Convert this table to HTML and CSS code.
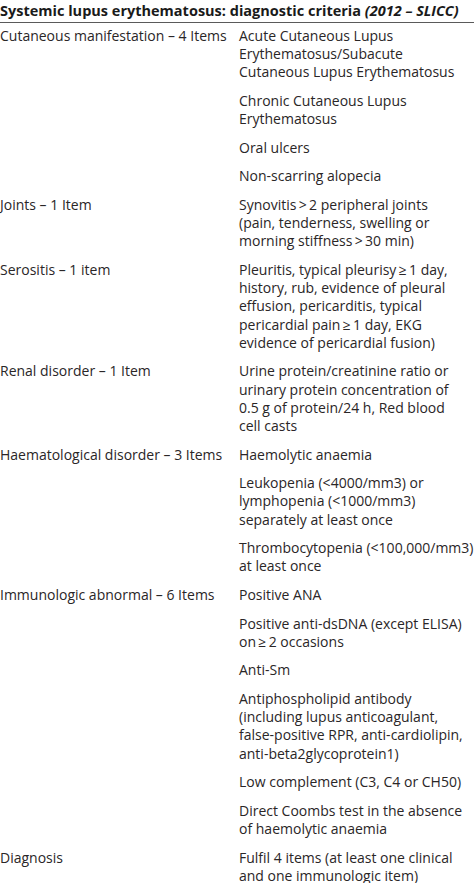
FILE: index.html
```html
<!DOCTYPE html>
<html lang="en">
<head>
<meta charset="utf-8">
<title>Systemic lupus erythematosus: diagnostic criteria</title>
<link rel="stylesheet" href="styles.css">
</head>
<body>
<div class="page">
  <h1 class="title">Systemic lupus erythematosus: diagnostic criteria <em>(2012 – SLICC)</em></h1>
  <div class="table">
    <div class="row">
      <div class="label">Cutaneous manifestation – 4 Items</div>
      <div class="items">
        <p>Acute Cutaneous Lupus<br>Erythematosus/Subacute<br>Cutaneous Lupus Erythematosus</p>
        <p>Chronic Cutaneous Lupus<br>Erythematosus</p>
        <p>Oral ulcers</p>
        <p>Non-scarring alopecia</p>
      </div>
    </div>
    <div class="row">
      <div class="label">Joints – 1 Item</div>
      <div class="items">
        <p>Synovitis&thinsp;&gt;&thinsp;2 peripheral joints<br>(pain, tenderness, swelling or<br>morning stiffness&thinsp;&gt;&thinsp;30 min)</p>
      </div>
    </div>
    <div class="row">
      <div class="label">Serositis – 1 item</div>
      <div class="items">
        <p>Pleuritis, typical pleurisy&thinsp;≥&thinsp;1 day,<br>history, rub, evidence of pleural<br>effusion, pericarditis, typical<br>pericardial pain&thinsp;≥&thinsp;1 day, EKG<br>evidence of pericardial fusion)</p>
      </div>
    </div>
    <div class="row">
      <div class="label">Renal disorder – 1 Item</div>
      <div class="items">
        <p>Urine protein/creatinine ratio or<br>urinary protein concentration of<br>0.5 g of protein/24 h, Red blood<br>cell casts</p>
      </div>
    </div>
    <div class="row">
      <div class="label">Haematological disorder – 3 Items</div>
      <div class="items">
        <p>Haemolytic anaemia</p>
        <p>Leukopenia (&lt;4000/mm3) or<br>lymphopenia (&lt;1000/mm3)<br>separately at least once</p>
        <p>Thrombocytopenia (&lt;100,000/mm3)<br>at least once</p>
      </div>
    </div>
    <div class="row">
      <div class="label">Immunologic abnormal – 6 Items</div>
      <div class="items">
        <p>Positive ANA</p>
        <p>Positive anti-dsDNA (except ELISA)<br>on&thinsp;≥&thinsp;2 occasions</p>
        <p>Anti-Sm</p>
        <p>Antiphospholipid antibody<br>(including lupus anticoagulant,<br>false-positive RPR, anti-cardiolipin,<br>anti-beta2glycoprotein1)</p>
        <p>Low complement (C3, C4 or CH50)</p>
        <p>Direct Coombs test in the absence<br>of haemolytic anaemia</p>
      </div>
    </div>
    <div class="row">
      <div class="label">Diagnosis</div>
      <div class="items">
        <p>Fulfil 4 items (at least one clinical<br>and one immunologic item)</p>
      </div>
    </div>
  </div>
</div>
</body>
</html>
```

FILE: styles.css
```css
html, body {
  margin: 0;
  padding: 0;
  background: #ffffff;
}

body {
  font-family: "Open Sans", "Noto Sans", "Liberation Sans", sans-serif;
  font-size: 14px;
  line-height: 18.2px;
  color: #2a2627;
}

.page {
  width: 474px;
  overflow: hidden;
}

.title {
  margin: 0;
  font-size: 14.5px;
  font-weight: 700;
  line-height: 22px;
  color: #1a1a1a;
  white-space: nowrap;
  border-bottom: 1.5px solid #5a5a5a;
}

.title em {
  font-style: italic;
}

.table {
  display: flex;
  flex-direction: column;
  gap: 10.4px;
  padding-top: 4px;
}

.row {
  display: grid;
  grid-template-columns: 239px 1fr;
}

.label {
  white-space: nowrap;
}

.items {
  display: flex;
  flex-direction: column;
  gap: 10.4px;
}

.items p {
  margin: 0;
  white-space: nowrap;
}
```
